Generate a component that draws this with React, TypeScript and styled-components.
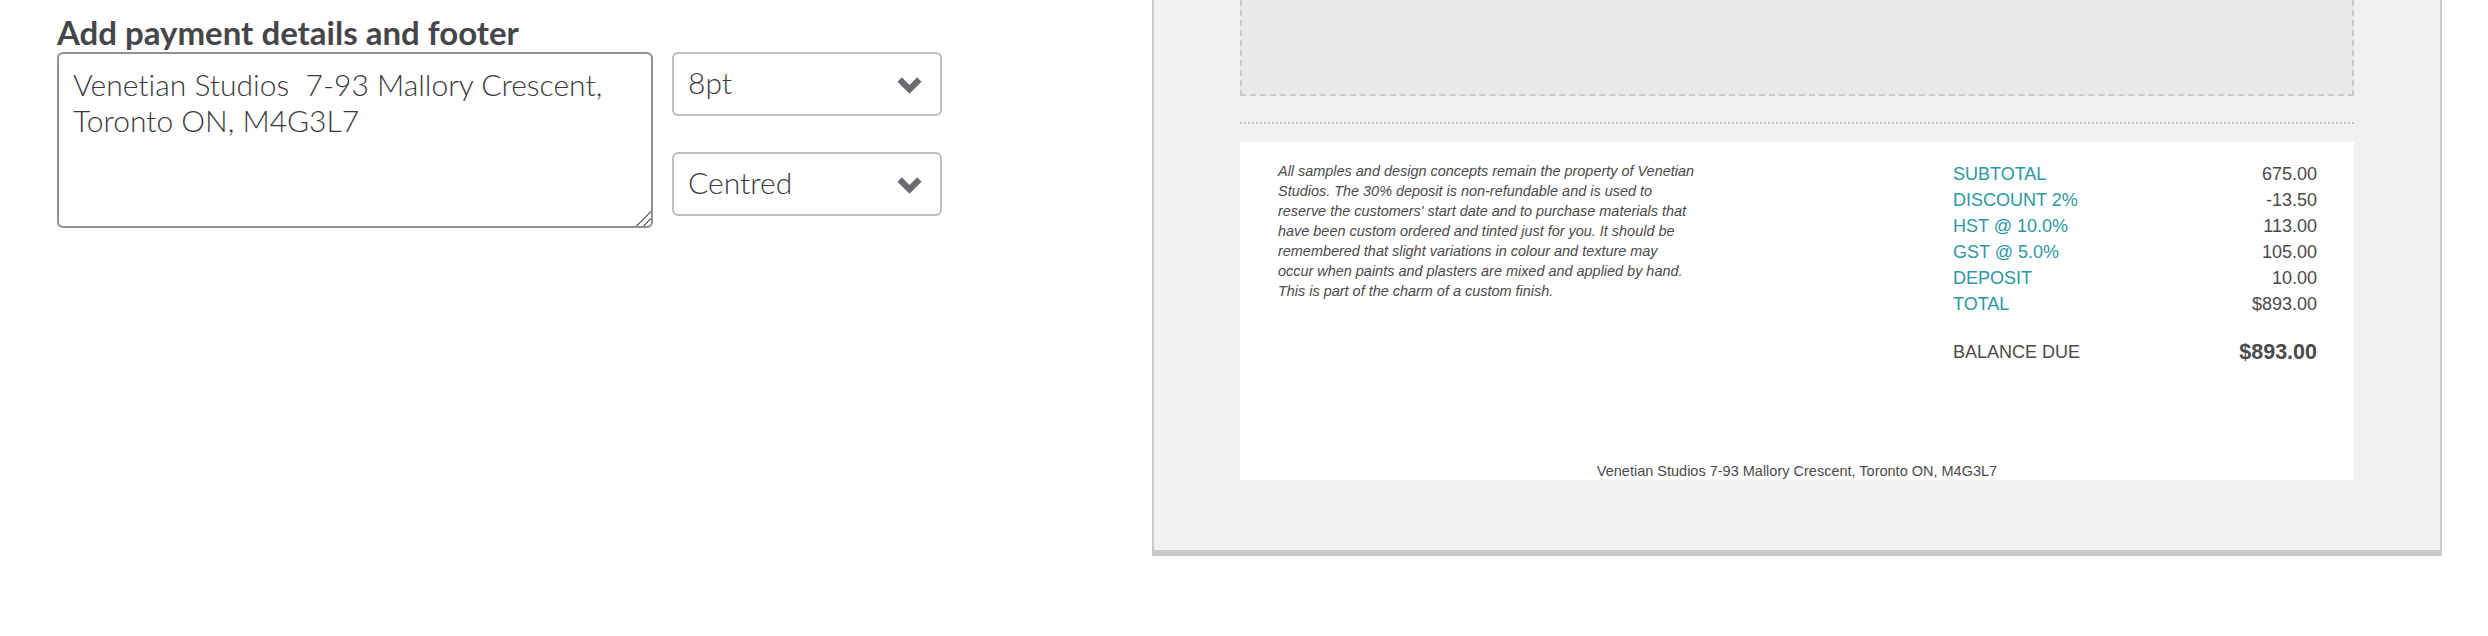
import React from 'react';
import styled, { createGlobalStyle } from 'styled-components';

const GlobalStyle = createGlobalStyle`
  html, body {
    margin: 0;
    padding: 0;
    background: #fff;
  }
`;

const summaryRows = [
  { label: 'SUBTOTAL', value: '675.00' },
  { label: 'DISCOUNT 2%', value: '-13.50' },
  { label: 'HST @ 10.0%', value: '113.00' },
  { label: 'GST @ 5.0%', value: '105.00' },
  { label: 'DEPOSIT', value: '10.00' },
  { label: 'TOTAL', value: '$893.00' },
];

const Chevron = () => (
  <ChevronIcon viewBox="0 0 26 18" aria-hidden="true">
    <path d="M0.5 5.5 L5 1 L13 9 L21 1 L25.5 5.5 L13 18 Z" fill="#6b6c72" />
  </ChevronIcon>
);

const App = () => (
  <Page>
    <GlobalStyle />
    <FormColumn>
      <Heading>Add payment details and footer</Heading>
      <FormRow>
        <FooterInput
          defaultValue={'Venetian Studios  7-93 Mallory Crescent, Toronto ON, M4G3L7'}
        />
        <SelectColumn>
          <SelectBox>
            <SelectText>8pt</SelectText>
            <Chevron />
          </SelectBox>
          <SelectBox>
            <SelectText>Centred</SelectText>
            <Chevron />
          </SelectBox>
        </SelectColumn>
      </FormRow>
    </FormColumn>
    <Preview>
      <Dropzone />
      <Divider />
      <InvoiceFoot>
        <FootColumns>
          <Terms>
            All samples and design concepts remain the property of Venetian
            Studios. The 30% deposit is non-refundable and is used to reserve
            the customers' start date and to purchase materials that have been
            custom ordered and tinted just for you. It should be remembered
            that slight variations in colour and texture may occur when paints
            and plasters are mixed and applied by hand. This is part of the
            charm of a custom finish.
          </Terms>
          <Summary>
            {summaryRows.map((row) => (
              <SummaryRow key={row.label}>
                <SummaryLabel>{row.label}</SummaryLabel>
                <span>{row.value}</span>
              </SummaryRow>
            ))}
            <BalanceRow>
              <span>BALANCE DUE</span>
              <BalanceValue>$893.00</BalanceValue>
            </BalanceRow>
          </Summary>
        </FootColumns>
        <FooterLine>Venetian Studios 7-93 Mallory Crescent, Toronto ON, M4G3L7</FooterLine>
      </InvoiceFoot>
    </Preview>
  </Page>
);

export default App;

const Page = styled.div`
  display: flex;
  justify-content: space-between;
  align-items: flex-start;
  width: 2488px;
  height: 636px;
  padding-right: 46px;
  box-sizing: border-box;
  overflow: hidden;
  font-family: 'Liberation Sans', Arial, sans-serif;
`;

const FormColumn = styled.div`
  padding: 13px 0 0 57px;
  color: #393a3d;
  font-family: Lato, 'Open Sans', sans-serif;
  font-variant-ligatures: none;
`;

const Heading = styled.h2`
  margin: 0;
  height: 39px;
  font-size: 33px;
  line-height: 38px;
  font-weight: 700;
  color: #45464a;
`;

const FormRow = styled.div`
  display: flex;
  gap: 19px;
`;

const FooterInput = styled.textarea`
  display: block;
  width: 596px;
  height: 176px;
  margin: 0;
  padding: 12px 14px;
  box-sizing: border-box;
  border: 2px solid #8d9096;
  border-radius: 6px;
  outline: none;
  resize: both;
  color: #393a3d;
  font-family: Lato, 'Open Sans', sans-serif;
  font-size: 30px;
  line-height: 36px;
  font-weight: 300;
  font-variant-ligatures: none;

  &::-webkit-resizer {
    background: linear-gradient(
      135deg,
      transparent 0 47%,
      #777 47% 54%,
      transparent 54% 72%,
      #777 72% 79%,
      transparent 79%
    );
  }
`;

const SelectColumn = styled.div`
  display: flex;
  flex-direction: column;
  gap: 36px;
`;

const SelectBox = styled.div`
  display: flex;
  justify-content: space-between;
  align-items: center;
  width: 270px;
  height: 64px;
  padding: 0 18px 0 14px;
  box-sizing: border-box;
  border: 2px solid #babec5;
  border-radius: 6px;
  color: #393a3d;
  font-size: 30px;
  font-weight: 300;
`;

const SelectText = styled.span`
  margin-top: -4px;
`;

const ChevronIcon = styled.svg`
  width: 25px;
  height: 18px;
  margin-top: 2px;
`;

const Preview = styled.section`
  width: 1290px;
  height: 556px;
  padding: 0 86px;
  box-sizing: border-box;
  background: #f1f1f1;
  border-left: 2px solid #cacaca;
  border-right: 2px solid #cacaca;
  border-bottom: 6px solid #cacaca;
`;

const Dropzone = styled.div`
  height: 96px;
  box-sizing: border-box;
  background: #e9e9e9;
  border: 2px dashed #cacaca;
  border-top: none;
`;

const Divider = styled.div`
  margin: 26px 0 18px;
  border-top: 2px dotted #c4c4c4;
`;

const InvoiceFoot = styled.div`
  display: flex;
  flex-direction: column;
  justify-content: space-between;
  height: 338px;
  background: #fff;
  color: #4a4a4a;
`;

const FootColumns = styled.div`
  display: flex;
  justify-content: space-between;
  padding: 19px 37px 0 38px;
`;

const Terms = styled.p`
  width: 418px;
  margin: 0;
  font-size: 14.45px;
  line-height: 20px;
  font-style: italic;
`;

const Summary = styled.div`
  width: 364px;
  font-size: 18px;
`;

const SummaryRow = styled.div`
  display: flex;
  justify-content: space-between;
  height: 26px;
  line-height: 26px;
`;

const SummaryLabel = styled.span`
  color: #2a98a2;
`;

const BalanceRow = styled.div`
  display: flex;
  justify-content: space-between;
  align-items: center;
  margin-top: 20px;
  height: 30px;
`;

const BalanceValue = styled.span`
  font-size: 21.5px;
  font-weight: 700;
`;

const FooterLine = styled.div`
  text-align: center;
  font-size: 14.5px;
  line-height: 18px;
`;
